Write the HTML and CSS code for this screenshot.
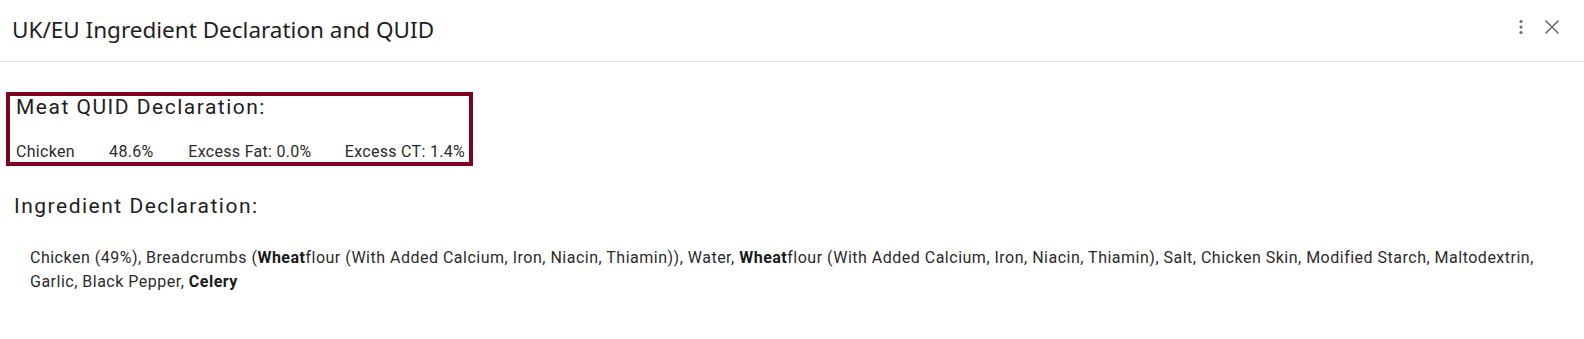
FILE: index.html
```html
<!DOCTYPE html>
<html lang="en">
  <head>
    <meta charset="UTF-8" />
    <title>UK/EU Ingredient Declaration and QUID</title>
    <link rel="stylesheet" href="styles.css">
  </head>
  <body>
    <div class="dialog">
      <div class="header">
        <h1 class="title">UK/EU Ingredient Declaration and QUID</h1>
        <div class="actions">
          <button class="iconBtn" title="More">
            <svg width="16" height="16" viewBox="0 0 16 16">
              <circle cx="8" cy="2.5" r="1.6" fill="#666e78" />
              <circle cx="8" cy="8" r="1.6" fill="#666e78" />
              <circle cx="8" cy="13.5" r="1.6" fill="#666e78" />
            </svg>
          </button>
          <button class="iconBtn" title="Close">
            <svg width="16" height="16" viewBox="0 0 16 16">
              <path d="M1.5 1.5 L14.5 14.5 M14.5 1.5 L1.5 14.5" stroke="#666e78" stroke-width="1.6" fill="none" />
            </svg>
          </button>
        </div>
      </div>

      <div class="content">
        <div class="quidBox">
          <h2 class="sectionTitle">Meat QUID Declaration:</h2>
          <div class="quidRow">
            <span class="meat">Chicken</span>
            <span class="pct">48.6%</span>
            <span class="fat">Excess Fat: 0.0%</span>
            <span>Excess CT: 1.4%</span>
          </div>
        </div>

        <h2 class="sectionTitle ingTitle">Ingredient Declaration:</h2>
        <p class="ingredients">
          Chicken (49%), Breadcrumbs (<b>Wheat</b>flour (With Added Calcium, Iron, Niacin, Thiamin)), Water, <b>Wheat</b>flour (With Added Calcium, Iron, Niacin, Thiamin), Salt, Chicken Skin, Modified Starch, Maltodextrin, Garlic, Black Pepper, <b>Celery</b>
        </p>
      </div>
    </div>
  </body>
</html>
```

FILE: styles.css
```css
* {
  margin: 0;
  padding: 0;
  box-sizing: border-box;
}

body {
  background: #fff;
  color: #2b2b2b;
  font-family: Roboto, "Liberation Sans", sans-serif;
}

.dialog {
  width: 1584px;
  height: 339px;
}

.header {
  height: 62px;
  border-bottom: 1px solid #dedede;
  display: flex;
  align-items: center;
  justify-content: space-between;
  padding: 0 24px 0 12px;
}

.title {
  font-family: "Noto Sans", sans-serif;
  font-size: 22.5px;
  font-weight: 400;
  color: #1e1e1e;
  padding-bottom: 3px;
}

.actions {
  display: flex;
  align-items: center;
  gap: 15px;
  padding-bottom: 8px;
}

.iconBtn {
  border: none;
  background: none;
  cursor: pointer;
  display: flex;
}

.content {
  padding: 30px 6px 0 6px;
}

.quidBox {
  width: 467px;
  border: 4px solid #800020;
  padding: 0 4px 0 6px;
}

.sectionTitle {
  font-size: 21px;
  font-weight: 400;
  letter-spacing: 1.5px;
  color: #1e1e1e;
  line-height: 30px;
}

.quidBox .sectionTitle {
  line-height: 22px;
}

.quidRow {
  display: flex;
  white-space: nowrap;
  font-size: 16px;
  letter-spacing: 0.3px;
  color: #2b2b2b;
  margin-top: 24px;
  line-height: 20px;
}

.meat {
  width: 94px;
}

.pct {
  width: 80px;
}

.fat {
  width: 158px;
}

.ingTitle {
  margin: 25px 0 0 8px;
}

.ingredients {
  font-size: 16px;
  letter-spacing: 0.5px;
  line-height: 24px;
  color: #2b2b2b;
  margin: 25px 0 0 24px;
  max-width: 1530px;
}

.ingredients b {
  font-weight: 700;
  color: #1a1a1a;
}
```
